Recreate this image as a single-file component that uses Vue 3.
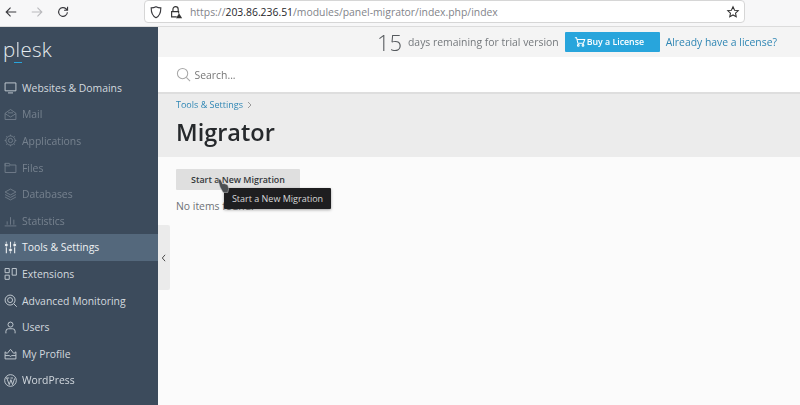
<script setup>
const items = [
  { t: 'Websites & Domains', k: 'mon', o: 1 },
  { t: 'Mail', k: 'mail', o: 0.38 },
  { t: 'Applications', k: 'gear', o: 0.38 },
  { t: 'Files', k: 'folder', o: 0.38 },
  { t: 'Databases', k: 'db', o: 0.38 },
  { t: 'Statistics', k: 'stat', o: 0.38 },
  { t: 'Tools & Settings', k: 'tools', o: 1, active: true },
  { t: 'Extensions', k: 'ext', o: 1 },
  { t: 'Advanced Monitoring', k: 'adv', o: 1 },
  { t: 'Users', k: 'user', o: 1 },
  { t: 'My Profile', k: 'prof', o: 1 },
  { t: 'WordPress', k: 'wp', o: 1 }
]
</script>

<template>
  <div class="page">
    <header class="browser">
      <svg class="bicon" width="14" height="14" viewBox="0 0 16 16"><path d="M14 8H2.500M7.500 3 2.500 8l5 5" /></svg>
      <svg class="bicon dim" width="14" height="14" viewBox="0 0 16 16"><path d="M2 8h11.500M8.500 3l5 5-5 5" /></svg>
      <svg class="bicon" width="14" height="14" viewBox="0 0 16 16"><path d="M13 8.200A5 5 0 1 1 11.400 4.300L13 6M13.200 2v4h-4" /></svg>
      <div class="urlbar">
        <svg class="bicon" width="14" height="14" viewBox="0 0 16 16"><path d="M8 2c2 1 3.500 1.300 5.500 1.300C13.500 9 12 12.500 8 14.500 4 12.500 2.500 9 2.500 3.300 4.500 3.300 6 3 8 2z" /></svg>
        <svg class="lock" width="14" height="14" viewBox="0 0 16 16">
          <path class="lk" d="M4.500 7V4.800a3 3 0 0 1 6 0V7M3 7.500h8v6H3z" />
          <path class="lkw" d="M11.500 8.500 16 15.500H7.500z" />
          <path class="lkf" d="M11.500 9.500 15 15H8z" />
        </svg>
        <div class="url"><span class="g">https://</span><span class="h">203.86.236.51</span><span class="g">/modules/panel-migrator/index.php/index</span></div>
        <svg class="star" width="14" height="14" viewBox="0 0 16 16"><path d="M8 2l1.800 3.900 4.200.5-3.100 2.900.8 4.200L8 11.400l-3.700 2.100.8-4.200L2 6.400l4.200-.5z" /></svg>
      </div>
    </header>

    <div class="main">
      <aside class="side">
        <div class="logo">p<span class="l">l<i class="ul"></i></span>esk</div>
        <nav class="nav">
          <a v-for="i in items" :key="i.t" class="item" :class="{ active: i.active }">
            <span class="inner" :style="{ opacity: i.o }">
              <svg class="ni" width="15" height="15" viewBox="0 0 18 18">
                <template v-if="i.k === 'mon'"><path d="M2.500 3.500h13v9.500h-13zM6 15.500h6" /></template>
                <template v-else-if="i.k === 'mail'"><path d="M2.500 7.500 9 3l6.500 4.500V15h-13zM2.500 8 9 12l6.500-4M6 7h6" /></template>
                <template v-else-if="i.k === 'gear'"><circle cx="9" cy="9" r="2.500" /><circle cx="9" cy="9" r="5.500" /><path d="M9 2v1.500M9 14.500V16M2 9h1.500M14.500 9H16M4 4l1 1M13 13l1 1M14 4l-1 1M5 13l-1 1" /></template>
                <template v-else-if="i.k === 'folder'"><path d="M2.500 4h5l1 2h7v9h-13zM2.500 4v3h6" /></template>
                <template v-else-if="i.k === 'db'"><path d="M9 2.500 15.500 6 9 9.500 2.500 6zM2.500 9 9 12.500 15.500 9M2.500 12 9 15.500 15.500 12" /></template>
                <template v-else-if="i.k === 'stat'"><path d="M2 15.500h14M5 14V10M9 14V5M13 14V8" /></template>
                <template v-else-if="i.k === 'tools'"><path class="thick" d="M4 2v14M9 2v14M14 2v14" /><circle class="fill" cx="4" cy="6" r="2.300" /><circle class="fill" cx="9" cy="12" r="2.300" /><circle class="fill" cx="14" cy="6" r="2.300" /></template>
                <template v-else-if="i.k === 'ext'"><path d="M2.500 3h5v5h-5zM2.500 11h5v5h-5zM11 3h5v8h-5z" /></template>
                <template v-else-if="i.k === 'adv'"><circle cx="8.500" cy="8.500" r="6" /><circle cx="8.500" cy="8.500" r="3" /><path d="M13 13l3.500 3.500" /></template>
                <template v-else-if="i.k === 'user'"><circle cx="9" cy="5.500" r="3" /><path d="M3.500 16v-2.500a3 3 0 0 1 3-3h5a3 3 0 0 1 3 3V16" /></template>
                <template v-else-if="i.k === 'prof'"><path d="M2.500 7 5 9l4-5 4 5 2.500-2v8.500h-13zM2.500 11.500h5l1.500 1 1.500-1h5" /></template>
                <template v-else><circle cx="9" cy="9" r="7" /><path d="M4.500 6l3 8L9.500 8l2 6 2.500-7.500M3.500 6h4M9 6h3" /></template>
              </svg>
              <span class="lab">{{ i.t }}</span>
            </span>
          </a>
        </nav>
      </aside>

      <div class="right">
        <div class="trial">
          <span class="num">15</span>
          <span class="days">days remaining for trial version</span>
          <button class="buy">
            <svg width="12" height="12" viewBox="0 0 14 14"><path d="M1 2h2l1.500 6.500h6.500L12.500 4H3.500" /><circle cx="5" cy="11" r="1" /><circle cx="10.500" cy="11" r="1" /></svg>
            Buy a License
          </button>
          <a class="have">Already have a license?</a>
        </div>
        <div class="search">
          <svg width="15" height="15" viewBox="0 0 16 16"><circle cx="7" cy="7" r="5.500" /><path d="M11 11l4 4" /></svg>
          <span>Search...</span>
        </div>
        <div class="head">
          <div class="crumb"><a>Tools &amp; Settings</a><svg width="6" height="8" viewBox="0 0 6 8"><path d="M1 1l3 3-3 3" /></svg></div>
          <h1>Migrator</h1>
        </div>
        <div class="content">
          <div class="toggle"><svg width="5" height="8" viewBox="0 0 6 10"><path d="M5 1 1.500 5 5 9" /></svg></div>
          <button class="start">Start a New Migration</button>
          <p class="none">No items found.</p>
          <div class="tip">Start a New Migration</div>
          <svg class="hand" width="14" height="17" viewBox="0 0 16 20"><path d="M2.500 1.500c1 0 1.500.5 2 1.500l2 4 1.500-.5 1.500.5 1.500.5 1.500 1 1 4-1 4.500H7L3.500 11 1.500 4.500c-.5-1.500 0-3 1-3z" /></svg>
        </div>
      </div>
    </div>
  </div>
</template>

<style>
html, body { margin: 0; padding: 0; overflow: hidden; }
</style>

<style scoped>
.page { width: 800px; height: 405px; display: flex; flex-direction: column; overflow: hidden; font-family: "Open Sans", "Noto Sans", sans-serif; filter: blur(0.3px); }
.browser { height: 27px; flex: none; background: #f7f7f8; border-bottom: 1px solid #dcdcdc; box-sizing: border-box; display: flex; align-items: center; padding: 0 0 2px 4px; gap: 12px; }
.bicon { flex: none; fill: none; stroke: #3a3a3f; stroke-width: 1.300; }
.bicon.dim { stroke: #b9b9bc; }
.urlbar { width: 601px; height: 23px; margin-left: 62px; margin-top: -1px; background: #fff; border: 1px solid #d6d6d6; border-radius: 4px; box-sizing: border-box; display: flex; align-items: center; padding: 0 4px; gap: 6px; flex: none; }
.lock { flex: none; }
.lk { fill: none; stroke: #333; stroke-width: 1.300; }
.lkw { fill: #fff; }
.lkf { fill: #333; }
.url { font-size: 10.400px; flex: 1; white-space: nowrap; margin-left: 1px; }
.url .g { color: #82848a; }
.url .h { color: #26262a; }
.star { fill: none; stroke: #333; stroke-width: 1.200; flex: none; }
.main { flex: 1; display: flex; min-height: 0; }
.side { width: 158px; flex: none; background: #3c4b5c; }
.logo { height: 47.500px; box-sizing: border-box; padding: 7px 0 0 3px; font-weight: 300; font-size: 20.500px; color: #e6ebef; letter-spacing: .3px; line-height: 30px; }
.l { position: relative; }
.ul { position: absolute; left: -2px; top: 27px; width: 8px; height: 1px; background: #28a5dc; }
.nav { display: flex; flex-direction: column; }
.item { height: 26.600px; display: block; color: #d3d9df; font-size: 10.400px; box-sizing: border-box; }
.item.active { background: #54687c; color: #eef1f3; }
.inner { display: flex; align-items: center; height: 100%; padding-left: 3px; gap: 4px; }
.ni { flex: none; fill: none; stroke: #c8d0d7; stroke-width: 1.100; }
.ni .fill { fill: #eef1f3; stroke: #54687c; }
.ni .thick { stroke: #eef1f3; stroke-width: 1.300; }
.lab { white-space: nowrap; }
.right { flex: 1; display: flex; flex-direction: column; min-width: 0; }
.trial { height: 30px; flex: none; background: #f4f4f4; display: flex; align-items: center; justify-content: flex-end; padding-right: 23px; box-sizing: border-box; color: #74787c; }
.num { font-size: 22px; font-weight: 300; color: #55595d; margin-right: 6px; }
.days { font-size: 10.400px; margin-right: 6px; }
.buy { width: 95px; height: 20px; background: #28a5dc; border: 0; border-radius: 1px; color: #fff; font: 600 8.800px "Open Sans", sans-serif; display: flex; align-items: center; gap: 1px; padding: 0 0 0 9px; margin-right: 6px; }
.buy svg { fill: none; stroke: #fff; stroke-width: 1.200; }
.have { font-size: 10.400px; color: #2f86b4; }
.search { height: 37px; flex: none; background: #fff; border-bottom: 2px solid #dedede; box-sizing: border-box; display: flex; align-items: center; gap: 3.500px; padding: 0 0 0 18px; font-size: 10.400px; color: #777; }
.search svg { fill: none; stroke: #a8a8a8; stroke-width: 1.100; }
.head { height: 63px; flex: none; background: #ececec; box-sizing: border-box; padding: 3px 0 0 18px; }
.crumb { display: flex; align-items: center; gap: 4px; font-size: 9px; line-height: 15px; color: #2f86b4; }
.crumb svg { fill: none; stroke: #9a9a9a; }
h1 { margin: 3px 0 0; font-size: 23.500px; font-weight: 600; color: #26292c; line-height: 34px; }
.content { flex: 1; background: #fbfbfb; position: relative; padding: 12px 0 0 18px; }
.toggle { position: absolute; left: 0; top: 68px; width: 12px; height: 65px; background: #ebebeb; border-radius: 0 2px 2px 0; display: flex; align-items: center; padding-left: 3px; box-sizing: border-box; }
.toggle svg { fill: none; stroke: #444; stroke-width: 1.200; }
.start { display: block; width: 124px; height: 21px; background: #dfdfdf; border: 0; border-radius: 1px; font: 600 8.900px "Open Sans", sans-serif; color: #33373a; padding: 0; }
.none { margin: 8px 0 0; font-size: 10.400px; line-height: 16px; color: #6e7276; }
.tip { position: absolute; left: 66px; top: 31px; width: 107px; height: 21px; background: #1e1e20; color: #d8d8d8; font-size: 9px; display: flex; align-items: center; justify-content: center; box-shadow: 0 1px 3px rgba(0,0,0,.35); border-radius: 1px; }
.hand { position: absolute; left: 59px; top: 21px; fill: #4c4f52; stroke: #c8c8c8; stroke-width: .6; }
</style>
